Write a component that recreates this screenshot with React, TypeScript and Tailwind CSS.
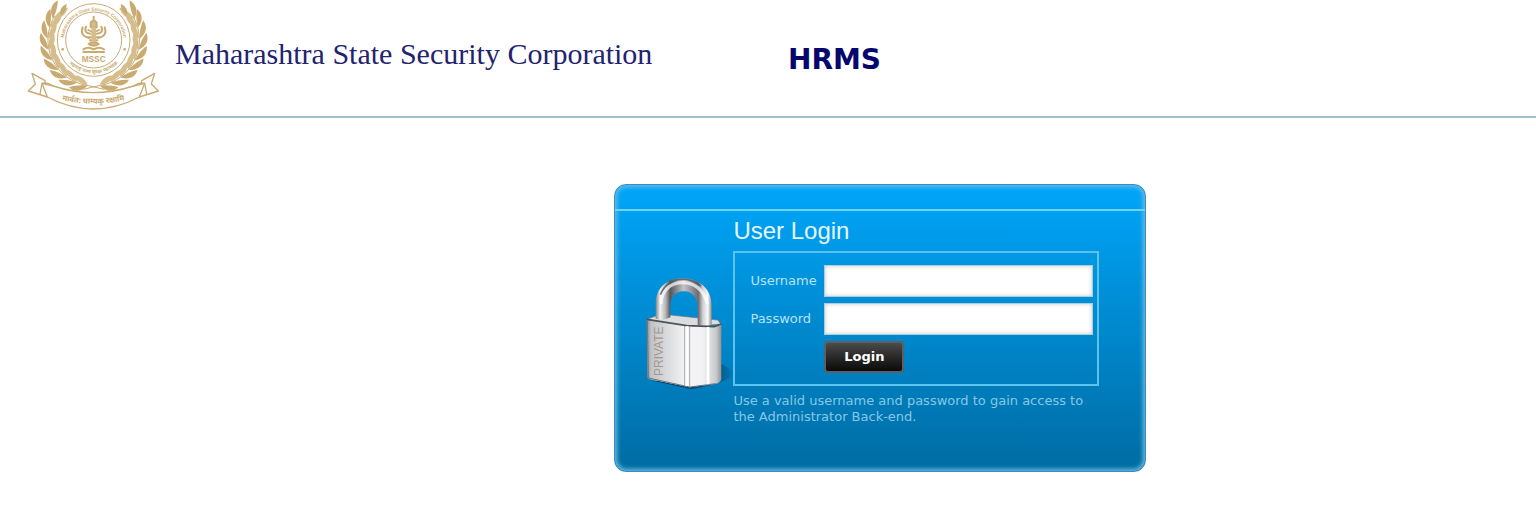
import React, {useState} from "react";

const gold = "#c9aa70";

// each entry is the angle of one leaf pair on the left half of the wreath
const leafAngles = [101, 115, 129, 143, 157, 171, 185, 199, 211];

function HalfWreath(props: {transform?: string}) {
    return <g transform={props.transform} fill={gold}>
        <path d="M252 268 Q228 262 200 256 A138 138 0 0 1 104 48" fill="none" stroke={gold} strokeWidth="3"/>
        {leafAngles.map((angle) => <g key={angle} transform={`translate(221 120) rotate(${angle}) translate(138 0)`}>
            <path d="M0 -8 C0 8 6 30 15 46 C27 28 22 6 0 -8Z"/>
            <path d="M-2 -8 C-22 4 -27 22 -22 44 C-8 32 -1 12 -2 -8Z" fill="#d6bd8c"/>
        </g>)}
        <path d="M122 46 Q116 22 140 11 Q140 34 122 46Z"/>
    </g>
}

function Emblem() {
    return <svg className="w-[150px] h-[116px] shrink-0" viewBox="0 0 450 348" role="img" aria-label="MSSC emblem">
        <defs>
            <path id="ringTop" d="M131 122 A90 90 0 0 1 311 122"/>
            <path id="ringBottom" d="M119 118 A102 102 0 0 0 323 118"/>
            <path id="ribbonLine" d="M106 296 Q220 326 334 296"/>
        </defs>
        <HalfWreath/>
        <HalfWreath transform="translate(442 0) scale(-1 1)"/>
        <circle cx="221" cy="120" r="109" fill="#fff" stroke={gold} strokeWidth="3"/>
        <circle cx="221" cy="120" r="84" fill="none" stroke={gold} strokeWidth="3"/>
        <g fill={gold} fontFamily="'Liberation Sans', 'Noto Sans', sans-serif" fontWeight="bold" textAnchor="middle">
            <text fontSize="14"><textPath href="#ringTop" startOffset="50%">Maharashtra State Security Corporation</textPath></text>
            <text fontSize="14"><textPath href="#ringBottom" startOffset="50%">महाराष्ट्र राज्य सुरक्षा महामंडळ</textPath></text>
            <text x="221" y="186" fontSize="25">MSSC</text>
        </g>
        <circle cx="128" cy="148" r="4" fill={gold}/>
        <circle cx="314" cy="148" r="4" fill={gold}/>
        <g fill="none" stroke={gold} strokeWidth="6" strokeLinecap="round" strokeLinejoin="round">
            <path d="M221 50 V62 M212 68 Q221 56 230 68 V82 H212Z" fill="#d6bd8c"/>
            <path d="M188 82 Q178 108 208 114 M254 82 Q264 108 234 114"/>
            <path d="M198 80 Q190 100 212 101 M244 80 Q252 100 230 101"/>
            <path d="M205 90 Q221 100 237 90 M204 112 H238 M210 121 H232"/>
            <path d="M206 132 Q221 120 236 132 Q221 142 206 132Z" fill="#d6bd8c"/>
            <path d="M190 148 Q204 138 221 148 Q238 138 252 148 M190 156 H252"/>
            <path d="M221 86 V120" strokeWidth="14" stroke="#d6bd8c"/>
        </g>
        <g fill="#fff" stroke={gold} strokeWidth="4" strokeLinejoin="round">
            <path d="M75 242 L36 220 L46 252 L25 273 L82 291Z"/>
            <path d="M365 242 L404 220 L394 252 L415 273 L358 291Z"/>
            <path d="M66 250 Q80 246 100 258 Q220 298 340 258 Q360 246 374 250 L358 291 Q220 363 82 291Z"/>
            <path d="M66 250 L60 282 M100 258 L66 250 M340 258 L374 250 L380 282" fill="none"/>
        </g>
        <text fontFamily="'Noto Sans', 'Liberation Sans', sans-serif" fontSize="23" fontWeight="bold" fill={gold} textAnchor="middle">
            <textPath href="#ribbonLine" startOffset="50%">मार्वत: धाम्यकृ रक्षामि</textPath>
        </text>
    </svg>
}

function PadLock() {
    return <svg className="w-[104px] h-[132px] shrink-0" viewBox="0 0 312 396" aria-hidden="true">
        <defs>
            <linearGradient id="body" x1="0" x2="1" y1="0" y2="0">
                <stop offset="0" stopColor="#8b8b8b"/>
                <stop offset=".06" stopColor="#c2c4c6"/>
                <stop offset=".3" stopColor="#dcdde0"/>
                <stop offset=".52" stopColor="#f4f4f6"/>
                <stop offset=".75" stopColor="#f2f2f4"/>
                <stop offset=".93" stopColor="#c9cacd"/>
                <stop offset="1" stopColor="#909194"/>
            </linearGradient>
            <linearGradient id="steel" x1="0" x2="1" y1="0" y2="0">
                <stop offset="0" stopColor="#7c8288"/>
                <stop offset=".08" stopColor="#f2f2f2"/>
                <stop offset=".18" stopColor="#b4b4b8"/>
                <stop offset=".26" stopColor="#55565a"/>
                <stop offset=".5" stopColor="#c4c4c8"/>
                <stop offset=".76" stopColor="#6b6b70"/>
                <stop offset=".84" stopColor="#cfcfd2"/>
                <stop offset=".93" stopColor="#fafafa"/>
                <stop offset="1" stopColor="#8c8c90"/>
            </linearGradient>
            <linearGradient id="shade" x1="0" x2="1" y1="0" y2="0">
                <stop offset="0" stopColor="#013a5e" stopOpacity=".9"/>
                <stop offset=".75" stopColor="#013a5e" stopOpacity=".7"/>
                <stop offset="1" stopColor="#013a5e" stopOpacity="0"/>
            </linearGradient>
        </defs>
        <path d="M250 296 Q285 310 300 328 Q290 352 170 376 L60 352Z" fill="url(#shade)"/>
        <path d="M36 166 L78 150 L248 168 L258 180 L160 190Z" fill="#d9dde0" stroke="#6e7276" strokeWidth="2"/>
        <path d="M62 164 V120 C62 70 98 43 142 43 C196 43 230 78 230 124 V182 Q208 192 188 182 V128 C188 100 170 82 146 82 C122 82 106 100 106 126 V160 Q84 172 62 164Z" fill="url(#steel)"/>
        <path d="M78 116 C80 78 108 56 142 56 C176 56 206 76 216 116" fill="none" stroke="#fff" strokeWidth="10" strokeLinecap="round" opacity=".7"/>
        <path d="M76 92 C90 60 114 46 142 45 C162 45 186 54 198 66" fill="none" stroke="#55585c" strokeWidth="5" opacity=".8"/>
        <path d="M35 166 L155 184 L240 188 L259 180 V346 Q258 356 240 360 L164 370 L44 346 Q36 344 37 336Z" fill="url(#body)"/>
        <path d="M35 166 L155 185 L238 188 L259 180" fill="none" stroke="#4e5256" strokeWidth="5"/>
        <path d="M37 168 L40 342 L164 369 L242 359" fill="none" stroke="#707276" strokeWidth="3"/>
        <path d="M149 186 V366 M164 187 V368" stroke="#a9aaae" strokeWidth="3"/>
        <path d="M156 187 V366 M219 189 V361" stroke="#fff" strokeWidth="8"/>
        <text transform="translate(83 336) rotate(-90)" fontFamily="'Liberation Sans', sans-serif" fontSize="36" fill="#a8978f">PRIVATE</text>
    </svg>
}

function LoginField(props: {id: string, label: string, type: string, value: string, update: (newVal: string) => void}) {
    return <div className="flex items-center">
        <label htmlFor={props.id} className="w-[74px] text-[13px] text-[#b4e4f8]">{props.label}</label>
        <input
            id={props.id}
            type={props.type}
            value={props.value}
            className="h-8 flex-1 min-w-0 bg-white px-2 text-[13px] text-slate-900 border border-[#a9cfe2] shadow-[inset_0_0_4px_#c9c9c9] outline-none"
            onChange={(e) => props.update(e.target.value)}/>
    </div>
}

function LoginCard() {
    const [username, setUsername] = useState("");
    const [password, setPassword] = useState("");

    return <main className="w-full max-w-[532px] h-72 ml-[40%] mt-[66px] rounded-xl border border-[#3a8fba] bg-linear-to-b from-[#00a6fa] to-[#006ca3] shadow-[inset_0_0_4px_2px_#6bbce4] overflow-hidden">
        <div className="h-[26px] border-b-2 border-[#6fd2fb]"></div>
        <div className="flex">
            <div className="w-[118px] shrink-0 pl-5 pt-[53px]">
                <PadLock/>
            </div>
            <form className="w-[366px] pt-1" onSubmit={(e) => e.preventDefault()}>
                <h1 className="h-9 font-['Liberation_Sans',sans-serif] text-2xl leading-8 text-[#e4f7ff]">User Login</h1>
                <div className="flex flex-col gap-1.5 border-2 border-[#5cc3ee] h-[135px] pt-3 pl-[15px] pr-1">
                    <LoginField id="username" label="Username" type="text" value={username} update={setUsername}/>
                    <LoginField id="password" label="Password" type="password" value={password} update={setPassword}/>
                    <button
                        type="submit"
                        className="ml-[74px] h-8 w-20 rounded-sm border-2 border-[#5a6064] bg-linear-to-b from-[#4b4b4b] to-[#0b0b0b] text-[13px] font-bold text-white cursor-pointer">
                        Login
                    </button>
                </div>
                <p className="pt-[7px] text-[13px] leading-4 text-[#86c8e6]">
                    Use a valid username and password to gain access to the Administrator Back-end.
                </p>
            </form>
        </div>
    </main>
}

function App() {
    return <div className="bg-white font-['DejaVu_Sans',Verdana,sans-serif]">
        <header className="flex items-start pl-5 border-b-2 border-[#a3bccb]">
            <Emblem/>
            <div className="ml-[5px] mt-8 w-[473px] whitespace-nowrap font-['Liberation_Serif',serif] text-3xl leading-11 text-[#23236f]">
                Maharashtra State Security Corporation
            </div>
            <div className="ml-[140px] mt-10 text-[28px] leading-10 font-bold text-[#06066e]">HRMS</div>
        </header>
        <LoginCard/>
    </div>
}

export default App;
